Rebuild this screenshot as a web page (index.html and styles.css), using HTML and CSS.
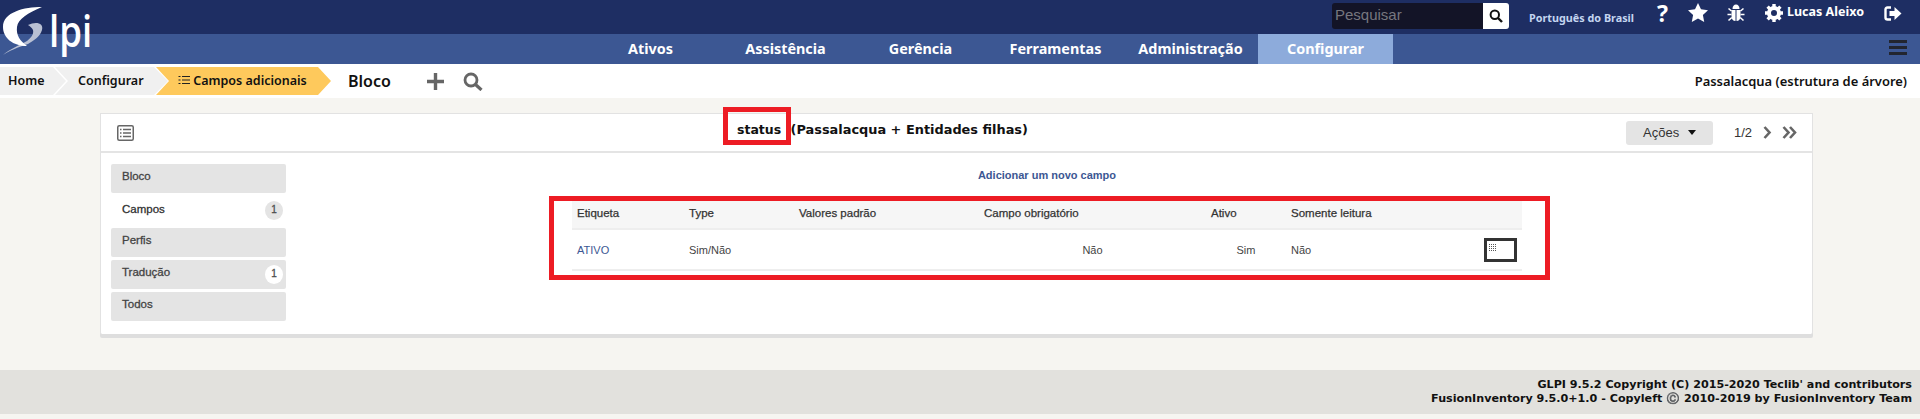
FILE: index.html
```html
<!DOCTYPE html>
<html lang="pt-BR">
<head>
    <meta charset="UTF-8">
    <title>GLPI - Campos adicionais</title>
    <link rel="stylesheet" href="styles.css">
</head>
<body>
<header class="masthead">
    <div class="logo">
        <svg class="logo-g" width="50" height="56" viewBox="0 0 50 56">
            <path fill="#b9c0d3" d="M28 25 C36 21 44 23 42 30 C40 37 33 41 28 44 C18 47 9 51 3 55 C10 49 20 45 27 41 C31 38 34 34 33 30 C32 28 30 26 28 25 Z"/>
            <path fill="#fff" d="M42 7 C24 7 3 12 3 27 C3 38 13 46 27 46 C20 41 16 35 17 27 C18 19 28 13 42 7 Z"/>
        </svg>
        <span class="logo-text">lpi</span>
    </div>
    <div class="topbar">
        <div class="search">
            <input class="search-input" type="text" placeholder="Pesquisar">
            <span class="search-btn">
                <svg width="14" height="14" viewBox="0 0 14 14"><circle cx="5.8" cy="5.8" r="4.2" fill="none" stroke="#111" stroke-width="2"/><path d="M9 9l4 4" stroke="#111" stroke-width="2.4"/></svg>
            </span>
        </div>
        <span class="lang">Português do Brasil</span>
        <span class="help">?</span>
        <svg class="star" width="20" height="19" viewBox="0 0 20 19"><path fill="#fff" d="M10 0l3 6.3 7 .9-5.100 4.800 1.300 7-6.200-3.400L3.800 19l1.300-7L0 7.200l7-.9z"/></svg>
        <svg class="bug" width="18" height="18" viewBox="0 0 18 18">
            <path fill="#fff" d="M5.500 5 C5.500 2 7 .5 9 .5 S12.500 2 12.500 5Z"/>
            <path fill="#fff" d="M4.500 6h4v11 C6 17 4.500 15 4.500 12Z M9.500 6h4v6 C13.500 15 12 17 9.500 17Z"/>
            <path stroke="#fff" stroke-width="1.600" fill="none" d="M4.500 7 L1.500 4.500 M13.500 7 L16.500 4.500 M4.500 10.500H.5 M13.500 10.500h4 M4.800 13.500 L1.500 16.500 M13.200 13.500 L16.500 16.500"/>
        </svg>
        <svg class="gear" width="18" height="18" viewBox="0 0 18 18">
            <circle cx="9" cy="9" r="5" fill="none" stroke="#fff" stroke-width="4"/>
            <path stroke="#fff" stroke-width="3.400" d="M9 0v4 M9 14v4 M0 9h4 M14 9h4 M2.600 2.600l3 3 M12.400 12.400l3 3 M2.600 15.400l3-3 M12.400 5.600l3-3"/>
        </svg>
        <span class="username">Lucas Aleixo</span>
        <svg class="logout" width="18" height="15" viewBox="0 0 18 15">
            <path fill="none" stroke="#fff" stroke-width="2.400" d="M7 1.500H3.500 Q1.500 1.500 1.500 3.500v8 Q1.500 13.500 3.500 13.500H7"/>
            <path fill="#fff" d="M5.500 5h5V1l7 6.500-7 6.500v-4h-5z"/>
        </svg>
    </div>
    <nav class="mainnav">
        <a class="nav-item">Ativos</a>
        <a class="nav-item">Assistência</a>
        <a class="nav-item">Gerência</a>
        <a class="nav-item">Ferramentas</a>
        <a class="nav-item">Administração</a>
        <a class="nav-item active">Configurar</a>
        <span class="hamburger"><i></i><i></i><i></i></span>
    </nav>
</header>

<div class="crumbbar">
    <div class="crumbs">
        <a class="crumb crumb-first">Home</a>
        <a class="crumb crumb-mid">Configurar</a>
        <a class="crumb crumb-current">
            <svg width="12" height="10" viewBox="0 0 12 10"><path stroke="#222" stroke-width="1" d="M4 1.500h8 M4 5h8 M4 8.500h8"/><path stroke="#222" stroke-width="1" d="M.5 1.500h2 M.5 5h2 M.5 8.500h2"/></svg>
            Campos adicionais
        </a>
    </div>
    <span class="page-title">Bloco</span>
    <svg class="crumb-icon add" width="17" height="17" viewBox="0 0 17 17"><path stroke="#666" stroke-width="3.400" d="M8.500 0v17 M0 8.500h17"/></svg>
    <svg class="crumb-icon find" width="20" height="19" viewBox="0 0 20 19"><circle cx="8" cy="8" r="6" fill="none" stroke="#666" stroke-width="2.800"/><path d="M12.500 12.500l6 5.500" stroke="#666" stroke-width="3.200"/></svg>
    <span class="entity">Passalacqua (estrutura de árvore)</span>
</div>

<main class="content">
    <section class="card">
        <div class="card-header">
            <svg class="list-icon" width="17" height="16" viewBox="0 0 17 16">
                <rect x=".75" y=".75" width="15.500" height="14.500" rx="1.500" fill="none" stroke="#666" stroke-width="1.500"/>
                <path stroke="#666" stroke-width="1.300" d="M6 4.500h8 M6 8h8 M6 11.500h8 M3 4.500h1.500 M3 8h1.500 M3 11.500h1.500"/>
            </svg>
            <h2 class="card-title">status <span class="title-rest">(Passalacqua + Entidades filhas)</span></h2>
            <div class="pager">
                <span class="actions-btn">Ações <i class="caret"></i></span>
                <span class="pager-count">1/2</span>
                <svg width="9" height="13" viewBox="0 0 9 13"><path fill="none" stroke="#666" stroke-width="2.600" d="M1.500 1l5 5.500-5 5.500"/></svg>
                <svg class="last" width="15" height="13" viewBox="0 0 15 13"><path fill="none" stroke="#666" stroke-width="2.600" d="M1.500 1l5 5.500-5 5.500 M8 1l5 5.500-5 5.500"/></svg>
            </div>
        </div>
        <div class="card-body">
            <ul class="tabs">
                <li class="tab">Bloco</li>
                <li class="tab tab-active">Campos <span class="badge">1</span></li>
                <li class="tab">Perfis</li>
                <li class="tab tab-gap">Tradução <span class="badge badge-white">1</span></li>
                <li class="tab tab-gap">Todos</li>
            </ul>
            <div class="tab-panel">
                <a class="add-link">Adicionar um novo campo</a>
                <table class="fields">
                    <thead>
                        <tr>
                            <th class="c1">Etiqueta</th>
                            <th class="c2">Type</th>
                            <th class="c3">Valores padrão</th>
                            <th class="c4">Campo obrigatório</th>
                            <th class="c5">Ativo</th>
                            <th>Somente leitura</th>
                            <th class="c7"></th>
                        </tr>
                    </thead>
                    <tbody>
                        <tr>
                            <td><a class="field-link">ATIVO</a></td>
                            <td>Sim/Não</td>
                            <td></td>
                            <td class="center">Não</td>
                            <td class="center">Sim</td>
                            <td>Não</td>
                            <td><span class="drag-box"><i class="drag-dots"></i></span></td>
                        </tr>
                    </tbody>
                </table>
            </div>
        </div>
        <div class="mark mark-title"></div>
        <div class="mark mark-table"></div>
    </section>
</main>

<footer class="footer">
    <div>GLPI 9.5.2 Copyright (C) 2015-2020 Teclib' and contributors</div>
    <div>FusionInventory 9.5.0+1.0 - Copyleft ©️ 2010-2019 by FusionInventory Team</div>
</footer>
</body>
</html>
```

FILE: styles.css
```css
html, body {
    margin: 0;
    height: 419px;
    overflow: hidden;
}
body {
    background: #f6f5f1;
    font-family: "Liberation Sans", Arial, sans-serif;
    font-size: 11px;
    color: #444;
}

/* masthead */
.masthead {
    position: relative;
}
.logo {
    position: absolute;
    top: 0;
    left: 0;
    width: 100px;
    height: 60px;
}
.logo-g {
    position: absolute;
    top: 0;
    left: 0;
}
.logo-text {
    position: absolute;
    left: 49px;
    top: 5px;
    font-family: "Open Sans", sans-serif;
    font-size: 44px;
    line-height: 50px;
    font-weight: 600;
    color: #fff;
    transform: scaleX(.83);
    transform-origin: left;
}
.topbar {
    height: 34px;
    background: #1e2e63;
    display: flex;
    align-items: center;
    padding-left: 1332px;
    box-sizing: border-box;
    font-family: "Noto Sans", sans-serif;
    font-weight: 700;
    color: #fff;
}
.search {
    display: flex;
    width: 177px;
    height: 26px;
    margin-top: -2px;
}
.search-input {
    width: 151px;
    height: 26px;
    box-sizing: border-box;
    border: 0;
    padding: 0 3px 3px;
    background: #131427;
    border-radius: 3px 0 0 3px;
    font-family: "Liberation Sans", Arial, sans-serif;
    font-size: 15px;
}
.search-input::placeholder {
    color: #77777f;
}
.search-btn {
    width: 26px;
    background: #fff;
    border-radius: 0 3px 3px 0;
    display: flex;
    align-items: center;
    justify-content: center;
}
.lang {
    margin-left: 20px;
    width: 108px;
    font-size: 10.800px;
    color: #c4d5f0;
    white-space: nowrap;
}
.help {
    margin-left: 20px;
    font-size: 23px;
    line-height: 28px;
    width: 14px;
    margin-top: -9px;
}
.star {
    margin-left: 17px;
    margin-top: -9px;
}
.bug {
    margin-left: 19px;
    margin-top: -8px;
}
.gear {
    margin-left: 20px;
    margin-top: -8px;
}
.username {
    margin-left: 4px;
    width: 82px;
    font-size: 12.500px;
    margin-top: -11px;
    white-space: nowrap;
}
.logout {
    margin-left: 15px;
    margin-top: -7px;
}
.mainnav {
    height: 30px;
    background: #3c5793;
    display: flex;
    padding-left: 583px;
    font-family: "Noto Sans", sans-serif;
    font-weight: 700;
    font-size: 14.400px;
    color: #fff;
}
.nav-item {
    width: 135px;
    line-height: 30px;
    text-align: center;
}
.nav-item.active {
    background: #8dabdb;
}
.hamburger {
    margin-left: 496px;
    margin-top: 6px;
    width: 18px;
}
.hamburger i {
    display: block;
    height: 3px;
    margin-bottom: 3px;
    background: #22252f;
}

/* breadcrumb row */
.crumbbar {
    height: 34px;
    background: #fff;
    display: flex;
    align-items: center;
    font-family: "Noto Sans", sans-serif;
    font-weight: 600;
    color: #111;
}
.crumbs {
    display: flex;
    width: 331px;
    font-size: 12.500px;
}
.crumb {
    height: 28px;
    line-height: 28px;
    box-sizing: border-box;
    background: #f0f0f0;
    white-space: nowrap;
}
.crumb-first {
    width: 66px;
    padding-left: 8px;
    clip-path: polygon(0 0, 53px 0, 100% 50%, 53px 100%, 0 100%);
}
.crumb-mid {
    width: 113px;
    margin-left: -11px;
    padding-left: 23px;
    clip-path: polygon(0 0, 99px 0, 100% 50%, 99px 100%, 0 100%, 13px 50%);
}
.crumb-current {
    width: 175px;
    margin-left: -12px;
    padding-left: 22px;
    background: #fec95c;
    clip-path: polygon(0 0, 162px 0, 100% 50%, 162px 100%, 0 100%, 13px 50%);
}
.page-title {
    margin-left: 17px;
    width: 42px;
    font-size: 16px;
}
.crumb-icon.add {
    margin-left: 37px;
}
.crumb-icon.find {
    margin-left: 19px;
}
.entity {
    margin-left: auto;
    margin-right: 13px;
    font-size: 12.950px;
}

/* main card */
.content {
    padding: 15px 107px 0 100px;
    height: 272px;
    box-sizing: border-box;
}
.card {
    position: relative;
    height: 221px;
    box-sizing: border-box;
    background: #fff;
    border: 1px solid #e2e2e2;
    border-bottom: 0;
    box-shadow: 0 4px 0 #dedede;
    border-radius: 0 0 2px 2px;
}
.card-header {
    height: 39px;
    box-sizing: border-box;
    border-bottom: 2px solid #e4e4e4;
    display: flex;
    align-items: center;
    padding: 0 15px 0 16px;
}
.card-title {
    margin: -6px 0 0 603px;
    font-family: "DejaVu Sans", sans-serif;
    font-size: 12.500px;
    font-weight: 700;
    color: #111;
}
.title-rest {
    margin-left: 5px;
    font-size: 12.900px;
}
.pager {
    margin-left: auto;
    display: flex;
    align-items: center;
    color: #333;
    font-size: 13px;
}
.actions-btn {
    width: 87px;
    height: 24px;
    line-height: 24px;
    background: #e4e4e4;
    border-radius: 3px;
    text-align: center;
    margin-right: 21px;
}
.caret {
    display: inline-block;
    margin-left: 5px;
    vertical-align: 2px;
    border: 4px solid transparent;
    border-top: 5px solid #111;
    border-bottom: 0;
}
.pager-count {
    margin-right: 11px;
}
.pager .last {
    margin-left: 10px;
}
.card-body {
    display: flex;
    padding-right: 4px;
}
.tabs {
    list-style: none;
    margin: 11px 0 0 10px;
    padding: 0;
    width: 175px;
    flex: none;
    font-size: 11.500px;
    -webkit-text-stroke: .3px #444;
}
.tab {
    position: relative;
    height: 29px;
    line-height: 25px;
    box-sizing: border-box;
    padding-left: 11px;
    background: #e4e4e4;
    border-radius: 2px;
}
.tab-active {
    height: 35px;
    line-height: 33px;
    background: #fff;
    color: #222;
}
.tab-gap {
    margin-top: 3px;
}
.badge {
    position: absolute;
    right: 3px;
    top: 8px;
    width: 18px;
    height: 19px;
    line-height: 17px;
    border-radius: 50%;
    background: #e4e4e4;
    text-align: center;
    font-size: 10px;
    color: #555;
}
.tab-gap .badge {
    top: 5px;
}
.badge-white {
    background: #fff;
}
.tab-panel {
    flex: 1;
    padding-top: 15px;
    text-align: center;
}
.add-link {
    display: block;
    line-height: 14px;
    margin-bottom: 16px;
    font-weight: 700;
    color: #3c5793;
}
.fields {
    width: 950px;
    margin: 0 auto;
    border-collapse: collapse;
    table-layout: fixed;
    text-align: left;
}
.fields th {
    height: 30px;
    padding: 0 5px;
    background: #f6f6f6;
    border-bottom: 2px solid #eee;
    font-size: 11.500px;
    font-weight: 400;
    color: #333;
    -webkit-text-stroke: .25px #333;
}
.fields td {
    height: 39px;
    padding: 0 5px;
    border-bottom: 2px solid #eee;
    color: #444;
}
.fields td.center {
    text-align: center;
}
.c1 { width: 102px; }
.c2 { width: 100px; }
.c3 { width: 175px; }
.c4 { width: 217px; }
.c5 { width: 70px; }
.c7 { width: 33px; }
.field-link {
    color: #3c5793;
}
.drag-box {
    display: block;
    width: 33px;
    height: 24px;
    box-sizing: border-box;
    border: 3px solid #333;
    position: relative;
}
.drag-dots {
    position: absolute;
    left: 2px;
    top: 3px;
    width: 8px;
    height: 8px;
    background: linear-gradient(#fff0 1px, #fff 1px) 0 0 / 2px 2px, linear-gradient(90deg, #555 1px, #fff 1px) 0 0 / 2px 2px;
}

/* red marks drawn over the screenshot */
.mark {
    position: absolute;
    box-sizing: border-box;
    border: 5px solid #ed1c24;
}
.mark-title {
    left: 622px;
    top: -7px;
    width: 68px;
    height: 38px;
}
.mark-table {
    left: 448px;
    top: 82px;
    width: 1001px;
    height: 84px;
}

.footer {
    height: 44px;
    background: #e2e1dd;
    box-sizing: border-box;
    padding: 8px 8px 0 0;
    text-align: right;
    font-family: "DejaVu Sans", sans-serif;
    font-weight: 700;
    font-size: 11.150px;
    line-height: 14px;
    color: #111;
}
```
